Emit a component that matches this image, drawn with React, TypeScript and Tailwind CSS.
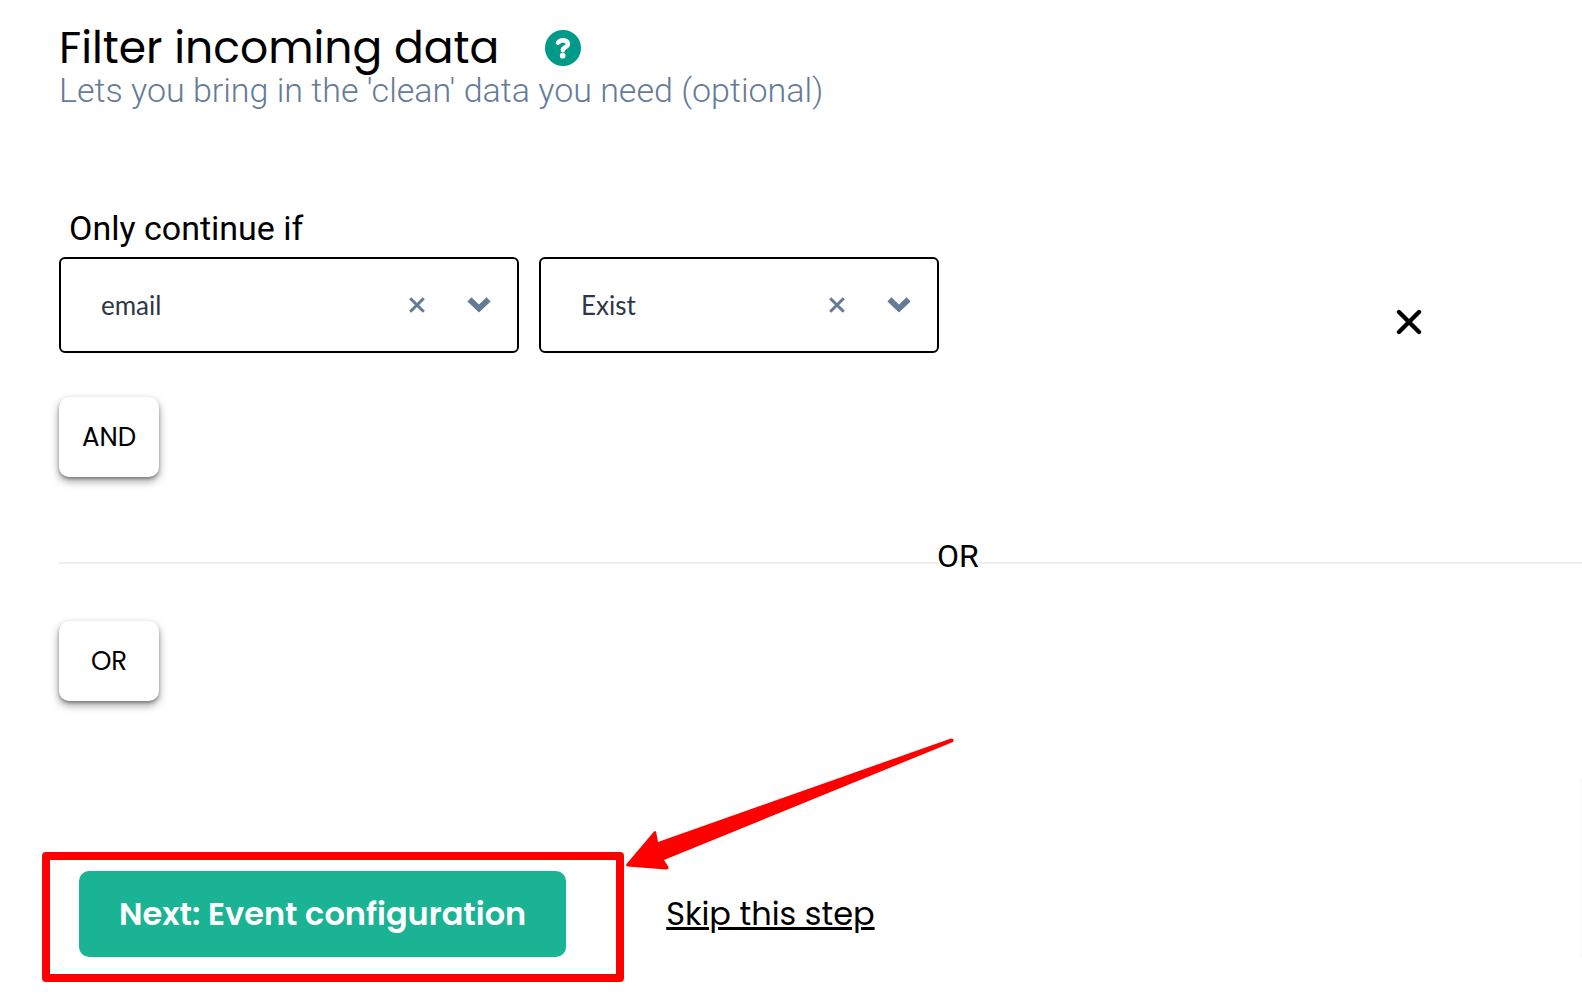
import { useState } from 'react';

const options = {
  field: ['email', 'name', 'phone'],
  operator: ['Exist', 'Does not exist', 'Equals'],
};

type PickerProps = {
  id: string;
  label: string;
  values: string[];
  width: string;
};

function Picker({ id, label, values, width }: PickerProps) {
  const [value, setValue] = useState(values[0]);
  return (
    <div className={`relative h-24 ${width}`}>
      <select
        id={id}
        aria-label={label}
        value={value}
        onChange={(e) => setValue(e.target.value)}
        className="h-full w-full appearance-none rounded-md border-2 border-black bg-white pr-32 pl-10 font-['Lato',sans-serif] text-[26px] text-[#2d3748]"
      >
        <option value="" />
        {values.map((v) => (
          <option key={v} value={v}>
            {v}
          </option>
        ))}
      </select>
      <button
        type="button"
        aria-label={`Clear ${label}`}
        onClick={() => setValue('')}
        className="absolute inset-y-0 right-[94px] flex items-center text-[#647b98]"
      >
        <svg viewBox="0 0 16 16" className="size-4" fill="none" stroke="currentColor" strokeWidth="3">
          <path d="M1.2 1.2 14.8 14.8M14.8 1.2 1.2 14.8" />
        </svg>
      </button>
      <svg
        viewBox="0 0 24 16"
        className="pointer-events-none absolute top-10 right-7 h-4 w-6 text-[#647b98]"
        fill="none"
        stroke="currentColor"
        strokeWidth="5.8"
      >
        <path d="M2.4 2.4 12 11.6 21.6 2.4" strokeLinejoin="miter" />
      </svg>
    </div>
  );
}

function HelpIcon() {
  return (
    <svg viewBox="0 0 108 108" className="size-9" aria-hidden="true">
      <circle cx="54" cy="54" r="54" fill="#009a88" />
      <path
        d="M39 38Q44 30.500 54 30.500Q68.500 31.500 68.500 42Q68.500 48 60 52.500Q53.500 56 53.500 60.500"
        fill="none"
        stroke="#ffffff"
        strokeWidth="13.500"
        strokeLinecap="round"
      />
      <circle cx="53" cy="77" r="8.500" fill="#ffffff" />
    </svg>
  );
}

function LogicButton({ children }: { children: string }) {
  return (
    <button
      type="button"
      className="h-20 w-25 rounded-[10px] bg-white text-[26px] shadow-[0_4px_8px_rgba(0,0,0,0.4),0_2px_3px_rgba(0,0,0,0.25)]"
    >
      {children}
    </button>
  );
}

export default function App() {
  return (
    <main className="relative min-h-screen overflow-hidden bg-white pt-6 pb-4 font-['Poppins',sans-serif] text-black">
      <div className="pl-[59px]">
        <header>
          <div className="flex items-center gap-[46px]">
            <h1 className="text-[44px] leading-12">Filter incoming data</h1>
            <button type="button" aria-label="Help">
              <HelpIcon />
            </button>
          </div>
          <p className="font-['Roboto',sans-serif] text-[34px] leading-9 font-light text-[#647b98]">
            Lets you bring in the 'clean' data you need (optional)
          </p>
        </header>

        <section className="mt-25">
          <h2 className="pl-2.5 font-['Roboto',sans-serif] text-[34px] leading-10">Only continue if</h2>
          <div className="mt-[9px] flex items-center justify-between pr-40">
            <div className="flex gap-5">
              <Picker id="field" label="Field" values={options.field} width="w-[460px]" />
              <Picker id="operator" label="Operator" values={options.operator} width="w-[400px]" />
            </div>
            <button type="button" aria-label="Remove condition" className="mt-[34px]">
              <svg viewBox="0 0 26 26" className="size-[26px]" fill="none" stroke="currentColor" strokeWidth="4.4" strokeLinecap="round">
                <path d="M3 3 23 23M23 3 3 23" />
              </svg>
            </button>
          </div>
          <div className="mt-11">
            <LogicButton>AND</LogicButton>
          </div>
        </section>

        <div className="mt-[59px] flex items-center font-['Roboto',sans-serif] text-[32px] leading-10">
          <span className="mt-3.5 h-0.5 flex-[879] bg-[#eeeeee]" />
          <span>OR</span>
          <span className="mt-3.5 h-0.5 flex-[604] bg-[#eeeeee]" />
        </div>

        <div className="mt-[45px]">
          <LogicButton>OR</LogicButton>
        </div>
      </div>

      <footer className="mt-[151px] flex items-center pl-[42px]">
        <div className="relative rounded-sm border-8 border-[#ff0000] pt-[11px] pr-[50px] pb-[17px] pl-[29px]">
          <button
            type="button"
            className="h-[86px] rounded-[10px] bg-[#1ab394] px-10 text-[32px] font-semibold text-white"
          >
            Next: Event configuration
          </button>
          <svg viewBox="0 0 330 134" className="absolute -top-[123px] left-[576px] h-[134px] w-[330px]" aria-hidden="true">
            <path
              d="M.5 127 28 94.500Q30.500 93 30.500 97L32 105 325 1.500Q329 2 327 5L38 123 42.500 130Q43 133 40 132.500L1.500 129.500Q-.5 129 .5 127Z"
              fill="#ff0000"
            />
          </svg>
        </div>
        <a href="#skip" className="ml-[42px] pb-1.5 text-[32px] underline decoration-[3px] underline-offset-2">
          Skip this step
        </a>
      </footer>

      <div className="absolute right-0 bottom-10 h-[180px] w-0.5 bg-[#fbfbfb]" />
    </main>
  );
}
